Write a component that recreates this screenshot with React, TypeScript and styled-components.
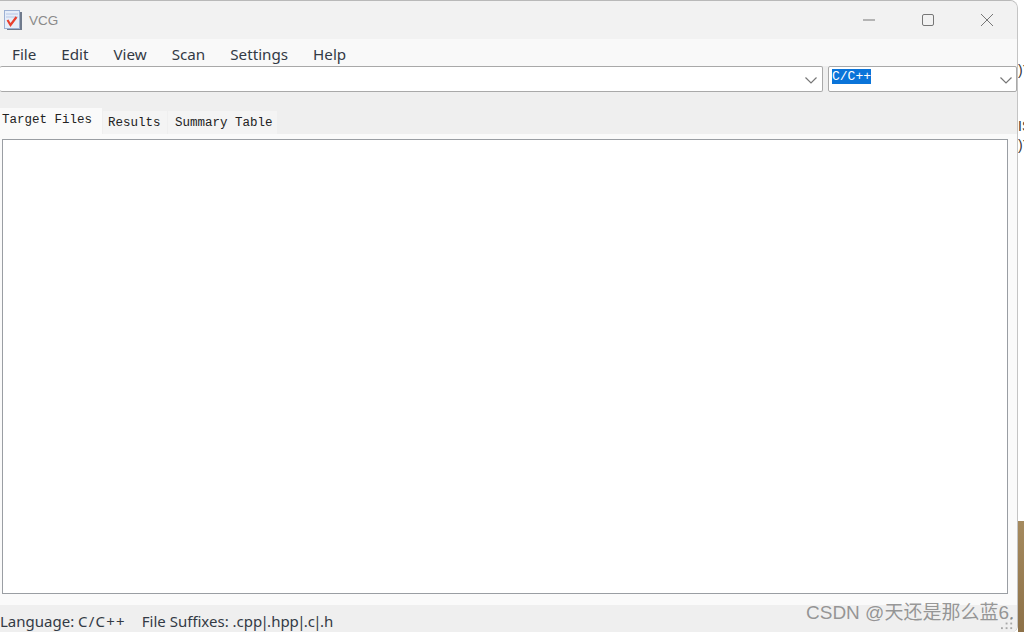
import React from 'react';
import styled, {createGlobalStyle} from 'styled-components';

const GlobalStyle = createGlobalStyle`
  html, body {
    margin: 0;
    padding: 0;
    width: 1024px;
    height: 632px;
    overflow: hidden;
    background: #ffffff;
  }
`;

const menuItems = ['File', 'Edit', 'View', 'Scan', 'Settings', 'Help'];

const tabs = [
    {label: 'Target Files', active: true, inset: 2, width: 102},
    {label: 'Results', active: false, inset: 5, width: 64},
    {label: 'Summary Table', active: false, inset: 7, width: 109},
];

function ChevronIcon() {
    return (
        <Chevron viewBox="0 0 12 7">
            <path d="M0.5 0.5 L6 6 L11.5 0.5" fill="none" stroke="#777777" strokeWidth="1.2"/>
        </Chevron>
    );
}

function AppIcon() {
    return (
        <svg width="22" height="21" viewBox="0 0 22 21">
            <rect x="7" y="2" width="15" height="18" fill="#6f7a8c"/>
            <rect x="4.5" y="0.5" width="15" height="18" fill="#e6edf9" stroke="#9cb0d4" strokeWidth="1"/>
            <path d="M6 4 H18 M6 7 H18" stroke="#b6c6e6" strokeWidth="1"/>
            <path d="M7.5 10 L10.5 15 L16.5 7" fill="none" stroke="#e8402f" strokeWidth="2.2"/>
        </svg>
    );
}

export default function App() {
    return (
        <Page>
            <GlobalStyle/>
            <Window>
                <TitleBar>
                    <TitleLeft>
                        <AppIcon/>
                        <TitleText>VCG</TitleText>
                    </TitleLeft>
                    <WindowControls>
                        <ControlIcon viewBox="0 0 12 12">
                            <path d="M0 6 H12" stroke="#777" strokeWidth="1"/>
                        </ControlIcon>
                        <ControlIcon viewBox="0 0 12 12">
                            <rect x="0.5" y="0.5" width="11" height="11" rx="1.5" fill="none" stroke="#777" strokeWidth="1"/>
                        </ControlIcon>
                        <ControlIcon viewBox="0 0 12 12">
                            <path d="M0 0 L12 12 M12 0 L0 12" stroke="#777" strokeWidth="1"/>
                        </ControlIcon>
                    </WindowControls>
                </TitleBar>
                <MenuBar>
                    {menuItems.map(item => <MenuItem key={item}>{item}</MenuItem>)}
                </MenuBar>
                <ComboRow>
                    <PathCombo>
                        <ChevronIcon/>
                    </PathCombo>
                    <LanguageCombo>
                        <Selected>C/C++</Selected>
                        <ChevronIcon/>
                    </LanguageCombo>
                </ComboRow>
                <TabStrip>
                    {tabs.map(tab => (
                        <Tab key={tab.label} $active={tab.active} $inset={tab.inset} $width={tab.width}>
                            {tab.label}
                        </Tab>
                    ))}
                </TabStrip>
                <TabBody>
                    <TextArea/>
                </TabBody>
                <StatusBar>
                    <span>Language: <Spaced>C/C++</Spaced></span>
                    <span>File Suffixes: .cpp<Pipe>|</Pipe>.hpp<Pipe>|</Pipe>.c<Pipe>|</Pipe>.h</span>
                    <Grip viewBox="0 0 14 14">
                        <g fill="#a8a8a8">
                            <rect x="10" y="1" width="2" height="2"/>
                            <rect x="5" y="6" width="2" height="2"/>
                            <rect x="10" y="6" width="2" height="2"/>
                            <rect x="0" y="11" width="2" height="2"/>
                            <rect x="5" y="11" width="2" height="2"/>
                            <rect x="10" y="11" width="2" height="2"/>
                        </g>
                    </Grip>
                </StatusBar>
            </Window>
            <Backdrop>
                <StrayText $top={62}>)Y</StrayText>
                <StrayText $top={118}>IS</StrayText>
                <StrayText $top={137}>)Y</StrayText>
                <Desktop/>
            </Backdrop>
            <Watermark>CSDN @天还是那么蓝6.</Watermark>
        </Page>
    );
}

const Page = styled.div`
  position: relative;
  display: flex;
  width: 1024px;
  height: 632px;
  overflow: hidden;
  font-family: "Noto Sans", "Liberation Sans", sans-serif;
`;

const Window = styled.div`
  position: relative;
  z-index: 1;
  display: flex;
  flex-direction: column;
  width: 1018px;
  height: 632px;
  flex: none;
  box-sizing: border-box;
  background: #efefef;
  border-top: 1px solid #b9b9b9;
  border-right: 1px solid #c4c4c4;
  border-top-right-radius: 8px;
  border-bottom-right-radius: 6px;
  overflow: hidden;
`;

const TitleBar = styled.div`
  display: flex;
  align-items: center;
  justify-content: space-between;
  height: 38px;
  flex: none;
  background: #f2f2f2;
`;

const TitleLeft = styled.div`
  display: flex;
  align-items: center;
  gap: 7px;
`;

const TitleText = styled.span`
  font-family: "Liberation Sans", sans-serif;
  font-size: 13.5px;
  color: #8a8a8a;
`;

const WindowControls = styled.div`
  display: flex;
  align-items: center;
  gap: 47px;
  padding-right: 24px;
`;

const ControlIcon = styled.svg`
  width: 12px;
  height: 12px;
`;

const MenuBar = styled.div`
  display: flex;
  align-items: center;
  gap: 25px;
  height: 27px;
  flex: none;
  padding-left: 12px;
  padding-top: 3px;
  box-sizing: border-box;
  background: #f9f9f9;
`;

const MenuItem = styled.span`
  font-size: 15.2px;
  color: #333a45;
`;

const ComboRow = styled.div`
  display: flex;
  gap: 5px;
  height: 26px;
  flex: none;
`;

const Combo = styled.div`
  display: flex;
  align-items: center;
  justify-content: space-between;
  box-sizing: border-box;
  height: 26px;
  background: #ffffff;
  border: 1px solid #a9a9a9;
  border-radius: 2px;
`;

const PathCombo = styled(Combo)`
  justify-content: flex-end;
  width: 823px;
  border-left: none;
  padding-right: 5px;
`;

const LanguageCombo = styled(Combo)`
  width: 189px;
  padding: 0 4px 0 3px;
`;

const Chevron = styled.svg`
  width: 12px;
  height: 7px;
  margin-top: 3px;
`;

const Selected = styled.span`
  align-self: flex-start;
  margin-top: 2px;
  background: #0a74d9;
  color: #ffffff;
  font-family: "Liberation Mono", monospace;
  font-size: 13px;
  line-height: 15px;
`;

const TabStrip = styled.div`
  display: flex;
  align-items: flex-end;
  gap: 1px;
  height: 42px;
  flex: none;
  box-sizing: border-box;
`;

const Tab = styled.div<{$active: boolean; $inset: number; $width: number}>`
  box-sizing: border-box;
  width: ${props => props.$width}px;
  height: ${props => (props.$active ? '26px' : '23px')};
  padding: ${props => (props.$active ? '4px' : '4px')} 0 0 ${props => props.$inset}px;
  background: ${props => (props.$active ? '#fafafa' : '#f4f4f4')};
  font-family: "Liberation Mono", "DejaVu Sans Mono", monospace;
  font-size: 12.5px;
  line-height: 16px;
  white-space: nowrap;
  color: #222222;
`;

const TabBody = styled.div`
  display: flex;
  flex: none;
  height: 471px;
  box-sizing: border-box;
  padding: 5px 9px 11px 2px;
  background: #fafafa;
`;

const TextArea = styled.div`
  flex: 1;
  box-sizing: border-box;
  background: #ffffff;
  border: 1px solid #9a9ea3;
`;

const StatusBar = styled.div`
  position: relative;
  display: flex;
  align-items: center;
  gap: 16px;
  flex: 1;
  padding-top: 5px;
  font-family: "Noto Sans", sans-serif;
  font-size: 15px;
  white-space: nowrap;
  color: #333a45;
  background: #efefef;
`;

const Spaced = styled.span`
  letter-spacing: 1.2px;
`;

const Pipe = styled.span`
  margin: 0 -1.7px;
`;

const Grip = styled.svg`
  position: absolute;
  right: 3px;
  bottom: 2px;
  width: 13px;
  height: 13px;
`;

const Backdrop = styled.div`
  position: relative;
  flex: 1;
  display: flex;
  flex-direction: column;
  justify-content: flex-end;
  background: #ffffff;
`;

const Desktop = styled.div`
  height: 111px;
  background: linear-gradient(180deg, #a58a5e, #8d7148);
`;

const StrayText = styled.span<{$top: number}>`
  position: absolute;
  top: ${props => props.$top}px;
  left: 0;
  font-family: "Liberation Sans", sans-serif;
  font-size: 14px;
  color: #333333;
`;

const Watermark = styled.div`
  position: absolute;
  z-index: 2;
  left: 806px;
  top: 597px;
  font-family: "Liberation Sans", "Noto Sans CJK SC", sans-serif;
  font-size: 19px;
  color: rgba(125, 125, 125, 0.8);
  white-space: nowrap;
`;
